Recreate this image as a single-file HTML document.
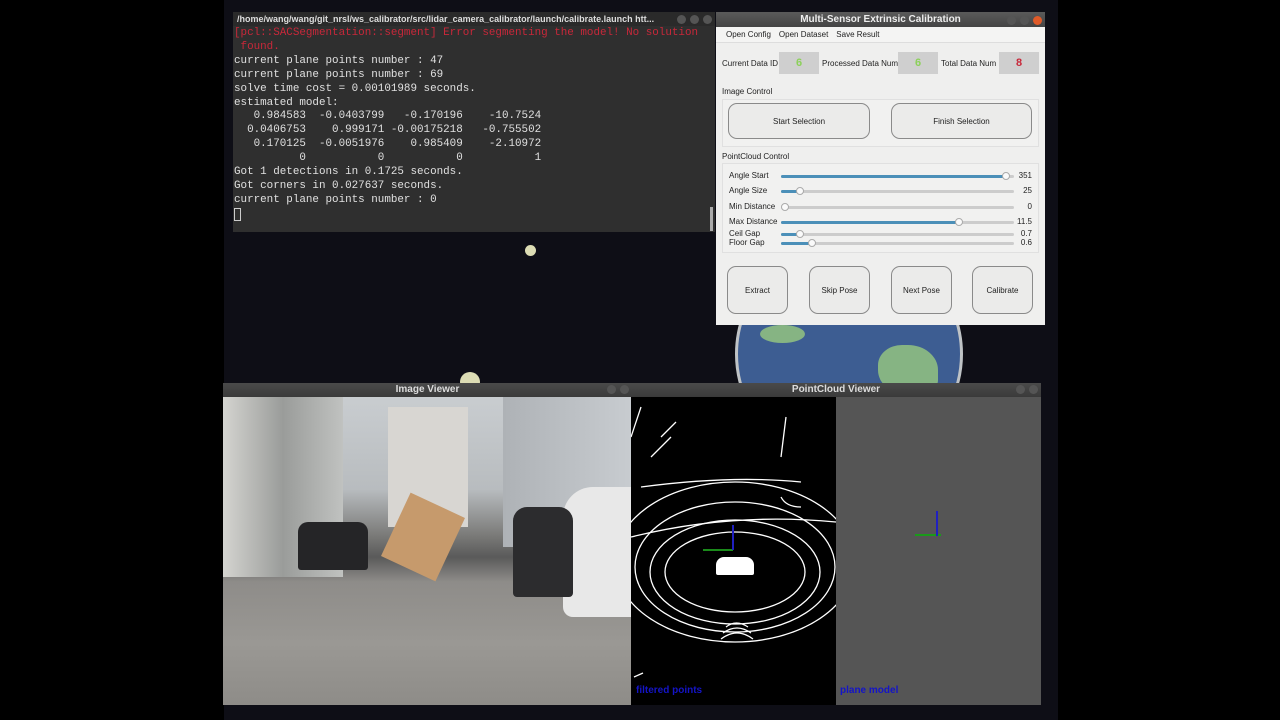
<!DOCTYPE html>
<html><head><meta charset="utf-8"><style>
*{margin:0;padding:0;box-sizing:border-box}
body{width:1280px;height:720px;background:#000;position:relative;overflow:hidden;font-family:"Liberation Sans",sans-serif}
.abs{position:absolute}
.desk{left:224px;top:0;width:834px;height:720px;background:#0e0e16}
.term{left:233px;top:12px;width:482px;height:220px;background:#2f2f2f}
.tbar{height:14px;background:#2a2a2a;color:#ddd;font-size:9px;font-weight:bold;line-height:14px;padding-left:4px;white-space:nowrap;overflow:hidden;position:relative}
.tt{font-family:"Liberation Mono",monospace;font-size:10.9px;line-height:13.9px;color:#e0e0e0;white-space:pre;padding-left:1px;padding-top:1px}
.red{color:#c8283a}
.dots{position:absolute;top:2px;right:3px}
.dots i{display:inline-block;width:9px;height:9px;border-radius:50%;background:#555;margin-left:4px}
.cal{left:716px;top:12px;width:329px;height:313px;background:#efefee;font-size:8px;color:#222}
.cbar{height:15px;background:linear-gradient(#5a5a5a,#444);color:#eee;font-size:10px;font-weight:bold;text-align:center;line-height:15px;position:relative}
.menu{height:16px;background:#f4f4f3;border-bottom:1px solid #ddd;line-height:16px;padding-left:10px;font-size:8px}
.menu span{margin-right:8px}
.box{position:absolute;width:40px;height:22px;background:#cfcfcf;text-align:center;line-height:22px;font-size:11px;font-weight:bold}
.btn{position:absolute;border:1px solid #8a8a8a;border-radius:9px;background:#ebebea;text-align:center;font-size:8px}
.grp{position:absolute;border:1px solid #e0e0e0;background:#f1f1f0}
.sl{position:absolute;left:58px;width:233px;height:3px;background:#ccc;border-radius:2px}
.sl b{position:absolute;left:0;top:0;height:3px;background:#4b8fb8;border-radius:2px}
.sl i{position:absolute;top:-3px;width:8px;height:8px;border-radius:50%;background:#fafafa;border:1px solid #aaa}
.lab{position:absolute;left:6px;font-size:8px}
.val{position:absolute;right:6px;font-size:8px}
.wbar{height:14px;background:linear-gradient(#4a4a4a,#3a3a3a);color:#ddd;font-size:10px;font-weight:bold;text-align:center;line-height:14px;position:relative}
</style></head><body>
<div class="abs desk"></div>
<div class="abs" style="left:525px;top:245px;width:11px;height:11px;border-radius:50%;background:#dcdcb4"></div>
<div class="abs" style="left:460px;top:372px;width:20px;height:20px;border-radius:50%;background:#dcdcb4"></div>
<!-- globe -->
<div class="abs" style="left:735px;top:240px;width:228px;height:228px;border-radius:50%;background:#3d5d92;border:3px solid #bfc3c6;overflow:hidden">
 <div class="abs" style="left:22px;top:82px;width:45px;height:18px;border-radius:50%;background:#86b483"></div>
 <div class="abs" style="left:140px;top:102px;width:60px;height:50px;border-radius:40% 50% 30% 50%;background:#86b483"></div>
</div>
<!-- terminal -->
<div class="abs term">
 <div class="tbar">/home/wang/wang/git_nrsl/ws_calibrator/src/lidar_camera_calibrator/launch/calibrate.launch htt...<span class="dots"><i></i><i></i><i></i></span></div>
<div class="tt"><span class="red">[pcl::SACSegmentation::segment] Error segmenting the model! No solution
 found.</span>
current plane points number : 47
current plane points number : 69
solve time cost = 0.00101989 seconds.
estimated model:
   0.984583  -0.0403799   -0.170196    -10.7524
  0.0406753    0.999171 -0.00175218   -0.755502
   0.170125  -0.0051976    0.985409    -2.10972
          0           0           0           1
Got 1 detections in 0.1725 seconds.
Got corners in 0.027637 seconds.
current plane points number : 0
<span style="display:inline-block;width:7px;height:13px;border:1px solid #ccc;vertical-align:middle"></span></div>
 <div class="abs" style="right:2px;top:195px;width:3px;height:24px;background:#aaa"></div>
</div>
<!-- calibration -->
<div class="abs cal">
 <div class="cbar">Multi-Sensor Extrinsic Calibration<span class="dots" style="top:3px"><i></i><i></i><i style="background:#e05a28"></i></span></div>
 <div class="menu"><span>Open Config</span><span>Open Dataset</span><span>Save Result</span></div>
 <div class="abs" style="left:6px;top:47px">Current Data ID</div>
 <div class="box" style="left:63px;top:40px;color:#8cd05a">6</div>
 <div class="abs" style="left:106px;top:47px">Processed Data Num</div>
 <div class="box" style="left:182px;top:40px;color:#8cd05a">6</div>
 <div class="abs" style="left:225px;top:47px">Total Data Num</div>
 <div class="box" style="left:283px;top:40px;color:#c8283a">8</div>
 <div class="abs" style="left:6px;top:75px">Image Control</div>
 <div class="grp" style="left:6px;top:87px;width:317px;height:48px"></div>
 <div class="btn" style="left:12px;top:91px;width:142px;height:36px;line-height:36px">Start Selection</div>
 <div class="btn" style="left:175px;top:91px;width:141px;height:36px;line-height:36px">Finish Selection</div>
 <div class="abs" style="left:6px;top:140px">PointCloud Control</div>
 <div class="grp" style="left:6px;top:151px;width:317px;height:90px">
  <div class="lab" style="top:7px">Angle Start</div><div class="sl" style="top:11px"><b style="width:225px"></b><i style="left:221px"></i></div><div class="val" style="top:7px">351</div>
  <div class="lab" style="top:22px">Angle Size</div><div class="sl" style="top:26px"><b style="width:19px"></b><i style="left:15px"></i></div><div class="val" style="top:22px">25</div>
  <div class="lab" style="top:38px">Min Distance</div><div class="sl" style="top:42px"><i style="left:0"></i></div><div class="val" style="top:38px">0</div>
  <div class="lab" style="top:53px">Max Distance</div><div class="sl" style="top:57px"><b style="width:178px"></b><i style="left:174px"></i></div><div class="val" style="top:53px">11.5</div>
  <div class="lab" style="top:65px">Ceil Gap</div><div class="sl" style="top:69px"><b style="width:19px"></b><i style="left:15px"></i></div><div class="val" style="top:65px">0.7</div>
  <div class="lab" style="top:74px">Floor Gap</div><div class="sl" style="top:78px"><b style="width:31px"></b><i style="left:27px"></i></div><div class="val" style="top:74px">0.6</div>
 </div>
 <div class="btn" style="left:11px;top:254px;width:61px;height:48px;line-height:48px">Extract</div>
 <div class="btn" style="left:93px;top:254px;width:61px;height:48px;line-height:48px">Skip Pose</div>
 <div class="btn" style="left:175px;top:254px;width:61px;height:48px;line-height:48px">Next Pose</div>
 <div class="btn" style="left:256px;top:254px;width:61px;height:48px;line-height:48px">Calibrate</div>
</div>
<!-- image viewer -->
<div class="abs" style="left:223px;top:383px;width:409px;height:322px;background:#8a8a88">
 <div class="wbar">Image Viewer<span class="dots"><i></i><i></i></span></div>
 <div class="abs" style="left:0;top:14px;width:409px;height:308px;overflow:hidden;background:linear-gradient(180deg,#c9cdd0 0%,#b8bcbf 30%,#7a7a78 45%,#5a5a5a 52%,#8e8c89 60%,#9a9894 80%,#8e8c88 100%)">
  <div class="abs" style="left:0;top:0;width:120px;height:180px;background:linear-gradient(90deg,#d4d4d0,#9a9c9a,#c0c2c0)"></div>
  <div class="abs" style="left:280px;top:0;width:129px;height:150px;background:linear-gradient(90deg,#aeb2b6,#c8ccd0)"></div>
  <div class="abs" style="left:165px;top:10px;width:80px;height:120px;background:#d8d6d2"></div>
  <div class="abs" style="left:340px;top:90px;width:69px;height:130px;background:#e8e8e8;border-radius:30px 0 0 10px"></div>
  <div class="abs" style="left:290px;top:110px;width:60px;height:90px;background:#2c2c2e;border-radius:14px 14px 4px 4px"></div>
  <div class="abs" style="left:75px;top:125px;width:70px;height:48px;background:#252527;border-radius:10px 10px 3px 3px"></div>
  <div class="abs" style="left:170px;top:105px;width:60px;height:70px;background:#c69a6c;transform:rotate(25deg)"></div>
 </div>
</div>
<!-- pointcloud viewer -->
<div class="abs" style="left:631px;top:383px;width:410px;height:322px;background:#555">
 <div class="wbar">PointCloud Viewer<span class="dots"><i></i><i></i></span></div>
 <div class="abs" style="left:0;top:14px;width:205px;height:308px;background:#000;overflow:hidden">
  <svg width="205" height="308" style="position:absolute;left:0;top:0" fill="none" stroke="#fff" stroke-width="1.3">
   <ellipse cx="104" cy="175" rx="70" ry="40"/>
   <ellipse cx="104" cy="175" rx="85" ry="52"/>
   <ellipse cx="104" cy="170" rx="100" ry="65"/>
   <ellipse cx="104" cy="165" rx="120" ry="80"/>
   <path d="M0 140 Q100 115 205 125"/>
   <path d="M10 90 Q100 78 170 85"/>
   <path d="M95 230 q10 -8 22 0 M92 236 q14 -10 28 0 M90 242 q16 -12 32 0"/>
   <path d="M20 60 l20 -20 M30 40 l15 -15 M150 60 l5 -40"/>
   <path d="M3 280 L12 276" />
   <path d="M0 40 L10 10"/>
   <path d="M150 100 q5 10 20 10" />
  </svg>
  <div class="abs" style="left:85px;top:160px;width:38px;height:18px;background:#fff;border-radius:8px 8px 2px 2px"></div>
  <div class="abs" style="left:72px;top:152px;width:30px;height:2px;background:#1a8a1a"></div>
  <div class="abs" style="left:101px;top:128px;width:2px;height:25px;background:#2020c0"></div>
  <div class="abs" style="left:5px;top:288px;color:#1414c8;font-size:10px;font-weight:bold">filtered points</div>
 </div>
 <div class="abs" style="left:284px;top:151px;width:26px;height:2px;background:#1a9a1a"></div>
 <div class="abs" style="left:305px;top:128px;width:2px;height:25px;background:#2020c0"></div>
 <div class="abs" style="left:209px;top:302px;color:#1414c8;font-size:10px;font-weight:bold">plane model</div>
</div>
</body></html>
